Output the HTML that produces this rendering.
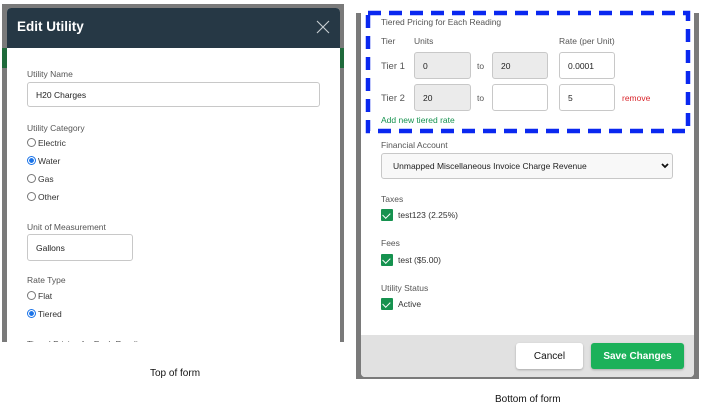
<!DOCTYPE html>
<html><head><style>
*{margin:0;padding:0;box-sizing:border-box}
body{width:702px;height:416px;background:#fff;position:relative;overflow:hidden;font-family:"Liberation Sans",sans-serif;color:#333}
.a{position:absolute}
.lbl{position:absolute;font-size:8.5px;color:#555;white-space:nowrap}
.txt{position:absolute;font-size:8.5px;color:#333;white-space:nowrap}
.in{position:absolute;border:1px solid #c8c8c8;border-radius:3px;background:#fff;font-size:8.5px;color:#222;padding-left:8px;display:flex;align-items:center}
.g{background:#ebebeb}
.rd{position:absolute;width:9px;height:9px;border:1px solid #777;border-radius:50%;background:#fff}
.rd.on{border:1px solid #1a73e8;background:radial-gradient(circle,#1a73e8 0 2.2px,#fff 2.6px)}
.cb{position:absolute;width:12px;height:12px;background:#16924f;border-radius:1px}
.cb:after{content:"";position:absolute;left:3px;top:1.5px;width:3.5px;height:6px;border:solid #fff;border-width:0 1.6px 1.6px 0;transform:rotate(45deg)}
</style></head><body>
<!-- left -->
<div class="a" style="left:2px;top:4px;width:342px;height:338px;background:#7a7a7a"></div>
<div class="a" style="left:2px;top:48px;width:342px;height:20px;background:#1f6a3b"></div>
<div class="a" style="left:7px;top:8px;width:333px;height:334px;background:#fff;border-radius:4px 4px 0 0;overflow:hidden">
 <div class="a" style="left:0;top:0;width:333px;height:40px;background:#263845"></div>
</div>
<div class="a" style="left:17px;top:19px;font-size:13.5px;font-weight:bold;color:#fff">Edit Utility</div>
<svg class="a" style="left:316px;top:20px" width="14" height="14"><path d="M1 1L13 13M13 1L1 13" stroke="#c8ced3" stroke-width="1.1"/></svg>
<div class="lbl" style="left:27px;top:69px">Utility Name</div>
<div class="in" style="left:27px;top:82px;width:293px;height:25px">H20 Charges</div>
<div class="lbl" style="left:27px;top:123px">Utility Category</div>
<div class="rd" style="left:27px;top:138px"></div><div class="txt" style="left:38px;top:138px">Electric</div>
<div class="rd on" style="left:27px;top:156px"></div><div class="txt" style="left:38px;top:156px">Water</div>
<div class="rd" style="left:27px;top:174px"></div><div class="txt" style="left:38px;top:174px">Gas</div>
<div class="rd" style="left:27px;top:192px"></div><div class="txt" style="left:38px;top:192px">Other</div>
<div class="lbl" style="left:27px;top:222px">Unit of Measurement</div>
<div class="in" style="left:27px;top:234px;width:106px;height:27px">Gallons</div>
<div class="lbl" style="left:27px;top:275px">Rate Type</div>
<div class="rd" style="left:27px;top:291px"></div><div class="txt" style="left:38px;top:291px">Flat</div>
<div class="rd on" style="left:27px;top:309px"></div><div class="txt" style="left:38px;top:309px">Tiered</div>
<div class="a" style="left:27px;top:339px;width:115px;height:3px;overflow:hidden"><div class="lbl" style="left:0;top:0">Tiered Pricing for Each Reading</div></div>
<div class="a" style="left:150px;top:368px;font-size:10px;color:#111">Top of form</div>
<!-- right -->
<div class="a" style="left:356px;top:13px;width:343px;height:366px;background:#7a7a7a"></div>
<div class="a" style="left:361px;top:0;width:333px;height:377px;background:#fff;border-radius:0 0 4px 4px;overflow:hidden">
 <div class="a" style="left:0;top:335px;width:333px;height:42px;background:#e1e1e1"></div>
</div>
<svg class="a" style="left:365px;top:10px" width="326" height="124"><rect x="3" y="3" width="320" height="118" fill="none" stroke="#0a28f0" stroke-width="4.5" stroke-dasharray="13 8"/></svg>
<div class="lbl" style="left:381px;top:17px">Tiered Pricing for Each Reading</div>
<div class="lbl" style="left:381px;top:36px">Tier</div>
<div class="lbl" style="left:414px;top:36px">Units</div>
<div class="lbl" style="left:559px;top:36px">Rate (per Unit)</div>
<div class="txt" style="left:381px;top:61px;font-size:9.5px;color:#555">Tier 1</div>
<div class="in g" style="left:414px;top:52px;width:57px;height:27px">0</div>
<div class="lbl" style="left:477px;top:61px">to</div>
<div class="in g" style="left:492px;top:52px;width:56px;height:27px">20</div>
<div class="in" style="left:559px;top:52px;width:56px;height:27px">0.0001</div>
<div class="txt" style="left:381px;top:93px;font-size:9.5px;color:#555">Tier 2</div>
<div class="in g" style="left:414px;top:84px;width:57px;height:27px">20</div>
<div class="lbl" style="left:477px;top:93px">to</div>
<div class="in" style="left:492px;top:84px;width:56px;height:27px"></div>
<div class="in" style="left:559px;top:84px;width:56px;height:27px">5</div>
<div class="txt" style="left:622px;top:93px;color:#d9262c">remove</div>
<div class="txt" style="left:381px;top:115px;color:#16924f">Add new tiered rate</div>
<div class="lbl" style="left:381px;top:140px">Financial Account</div>
<div class="in" style="left:381px;top:153px;width:292px;height:26px;background:#f8f8f8;padding-left:11px">Unmapped Miscellaneous Invoice Charge Revenue</div>
<svg class="a" style="left:661px;top:163px" width="8" height="6"><path d="M1 1L4 4L7 1" stroke="#111" stroke-width="1.8" fill="none"/></svg>
<div class="lbl" style="left:381px;top:194px">Taxes</div>
<div class="cb" style="left:381px;top:209px"></div><div class="txt" style="left:398px;top:210px">test123 (2.25%)</div>
<div class="lbl" style="left:381px;top:238px">Fees</div>
<div class="cb" style="left:381px;top:254px"></div><div class="txt" style="left:398px;top:255px">test ($5.00)</div>
<div class="lbl" style="left:381px;top:283px">Utility Status</div>
<div class="cb" style="left:381px;top:298px"></div><div class="txt" style="left:398px;top:299px">Active</div>
<div class="a" style="left:516px;top:343px;width:67px;height:26px;background:#fff;border-radius:3px;box-shadow:0 1px 2px rgba(0,0,0,.25);font-size:10px;color:#111;display:flex;align-items:center;justify-content:center">Cancel</div>
<div class="a" style="left:591px;top:343px;width:93px;height:26px;background:#1cb15a;border-radius:3px;box-shadow:0 1px 2px rgba(0,0,0,.25);font-size:10px;font-weight:bold;color:#fff;display:flex;align-items:center;justify-content:center">Save Changes</div>
<div class="a" style="left:495px;top:394px;font-size:10px;color:#111">Bottom of form</div>
</body></html>
